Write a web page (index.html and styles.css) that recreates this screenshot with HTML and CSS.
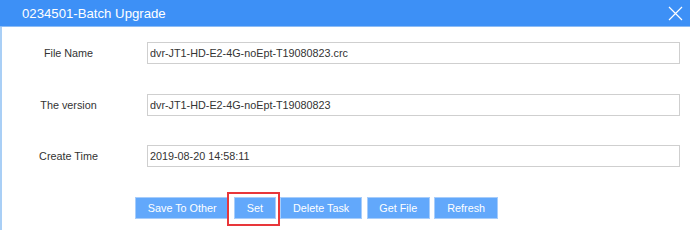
FILE: index.html
```html
<!DOCTYPE html>
<html lang="en">
<head>
  <meta charset="UTF-8" />
  <title>Batch Upgrade</title>
  <link rel="stylesheet" href="styles.css">
</head>
<body>
  <div class="dialog">
    <div class="dialog-head">
      <span class="dialog-title">0234501-Batch Upgrade</span>
      <svg class="close" width="15" height="15" viewBox="0 0 15 15">
        <path d="M1 1L14 14M14 1L1 14" stroke="#fff" stroke-width="1.2" fill="none"/>
      </svg>
    </div>

    <div class="dialog-body">
      <div class="row">
        <label>File Name</label>
        <input type="text" value="dvr-JT1-HD-E2-4G-noEpt-T19080823.crc" />
      </div>
      <div class="row">
        <label>The version</label>
        <input type="text" value="dvr-JT1-HD-E2-4G-noEpt-T19080823" />
      </div>
      <div class="row">
        <label>Create Time</label>
        <input type="text" value="2019-08-20 14:58:11" />
      </div>

      <div class="actions">
        <button>Save To Other</button>
        <span class="marked"><button>Set</button></span>
        <button>Delete Task</button>
        <button>Get File</button>
        <button>Refresh</button>
      </div>
    </div>
  </div>
</body>
</html>
```

FILE: styles.css
```css
body {
  margin: 0;
  padding: 0;
  font-family: 'Liberation Sans', Arial, sans-serif;
  background: #fff;
  color: #333;
}

.dialog {
  width: 690px;
}

.dialog-head {
  height: 26px;
  background-color: #3d90f6;
  border-bottom: 1px solid #8cbcf5;
  display: flex;
  align-items: center;
  justify-content: space-between;
  padding: 0 7px 0 22px;
}

.dialog-title {
  color: #fff;
  font-size: 13.2px;
}

.close {
  margin-top: 1px;
}

.dialog-body {
  border-left: 2px solid #a9cff6;
  height: 203px;
  padding-top: 15px;
  box-sizing: border-box;
}

.row {
  display: flex;
  align-items: center;
  height: 22px;
  margin-bottom: 29.5px;
}

.row label {
  width: 133px;
  text-align: center;
  font-size: 10.8px;
  color: #333;
}

.row input {
  width: 533px;
  height: 22px;
  box-sizing: border-box;
  border: 1px solid #cfcfcf;
  padding: 0 2px;
  font-family: 'Liberation Sans', Arial, sans-serif;
  font-size: 10.8px;
  color: #333;
  margin-left: 12px;
}

.actions {
  display: flex;
  align-items: center;
  gap: 4.5px;
  padding-left: 133px;
  margin-top: 0.5px;
}

.actions button {
  height: 22px;
  padding: 0 11.8px;
  background-color: #62a8fb;
  border: 1px solid #a7cdfb;
  color: #fff;
  font-family: 'Liberation Sans', Arial, sans-serif;
  font-size: 10.8px;
  cursor: pointer;
}

.marked {
  position: relative;
  display: flex;
}

.marked::after {
  content: "";
  position: absolute;
  left: -7px;
  top: -5px;
  right: -4px;
  bottom: -7px;
  border: 2px solid #e8363a;
}
```
